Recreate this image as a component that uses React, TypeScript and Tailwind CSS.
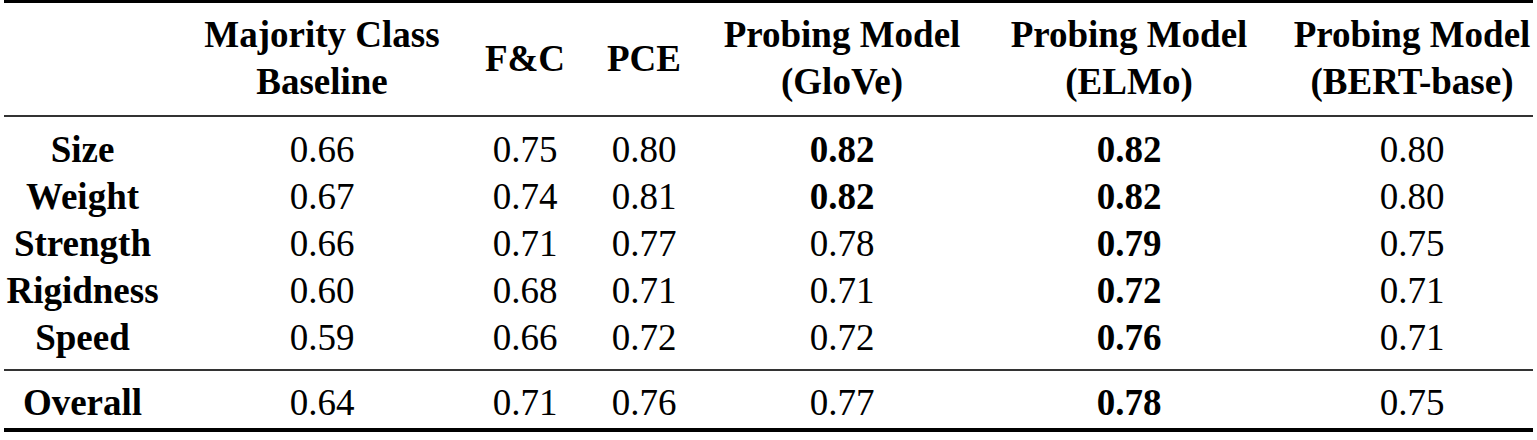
const COLS = [
  "w-[157px]",
  "w-[322px]",
  "w-[84px]",
  "w-[154px]",
  "w-[242px]",
  "w-[332px]",
  "w-[234px]",
];

const HEADERS: string[][] = [
  [],
  ["Majority Class", "Baseline"],
  ["F&C"],
  ["PCE"],
  ["Probing Model", "(GloVe)"],
  ["Probing Model", "(ELMo)"],
  ["Probing Model", "(BERT-base)"],
];

type Cell = { v: string; b?: boolean };

const ROWS: { label: string; cells: Cell[] }[] = [
  { label: "Size", cells: [{ v: "0.66" }, { v: "0.75" }, { v: "0.80" }, { v: "0.82", b: true }, { v: "0.82", b: true }, { v: "0.80" }] },
  { label: "Weight", cells: [{ v: "0.67" }, { v: "0.74" }, { v: "0.81" }, { v: "0.82", b: true }, { v: "0.82", b: true }, { v: "0.80" }] },
  { label: "Strength", cells: [{ v: "0.66" }, { v: "0.71" }, { v: "0.77" }, { v: "0.78" }, { v: "0.79", b: true }, { v: "0.75" }] },
  { label: "Rigidness", cells: [{ v: "0.60" }, { v: "0.68" }, { v: "0.71" }, { v: "0.71" }, { v: "0.72", b: true }, { v: "0.71" }] },
  { label: "Speed", cells: [{ v: "0.59" }, { v: "0.66" }, { v: "0.72" }, { v: "0.72" }, { v: "0.76", b: true }, { v: "0.71" }] },
];

const OVERALL: Cell[] = [{ v: "0.64" }, { v: "0.71" }, { v: "0.76" }, { v: "0.77" }, { v: "0.78", b: true }, { v: "0.75" }];

function DataRow({ label, cells }: { label: string; cells: Cell[] }) {
  return (
    <div className="flex leading-[47px]">
      <div className={`${COLS[0]} text-center font-bold whitespace-nowrap`}>{label}</div>
      {cells.map((c, i) => (
        <div key={i} className={`${COLS[i + 1]} text-center whitespace-nowrap ${c.b ? "font-bold" : ""}`}>
          {c.v}
        </div>
      ))}
    </div>
  );
}

export default function App() {
  return (
    <div className="w-[1537px] h-[440px] overflow-hidden bg-white text-black font-['Liberation_Serif','Times_New_Roman',serif] text-[37px]">
      <div className="ml-[4px] w-[1529px]">
        <div className="h-[3px] bg-black" />
        {/* header */}
        <div className="flex items-center pt-[8px] pb-[10px] leading-[47px] font-bold">
          {HEADERS.map((lines, i) => (
            <div key={i} className={`${COLS[i]} flex flex-col items-center whitespace-nowrap`}>
              {lines.map((l) => (
                <span key={l}>{l}</span>
              ))}
            </div>
          ))}
        </div>
        <div className="h-[2px] bg-[#333]" />
        <div className="pt-[9px] pb-[8px]">
          {ROWS.map((r) => (
            <DataRow key={r.label} label={r.label} cells={r.cells} />
          ))}
        </div>
        <div className="h-[2px] bg-[#333]" />
        <div className="pt-[8px] pb-[2px]">
          <DataRow label="Overall" cells={OVERALL} />
        </div>
        <div className="h-[4px] bg-black" />
      </div>
    </div>
  );
}
